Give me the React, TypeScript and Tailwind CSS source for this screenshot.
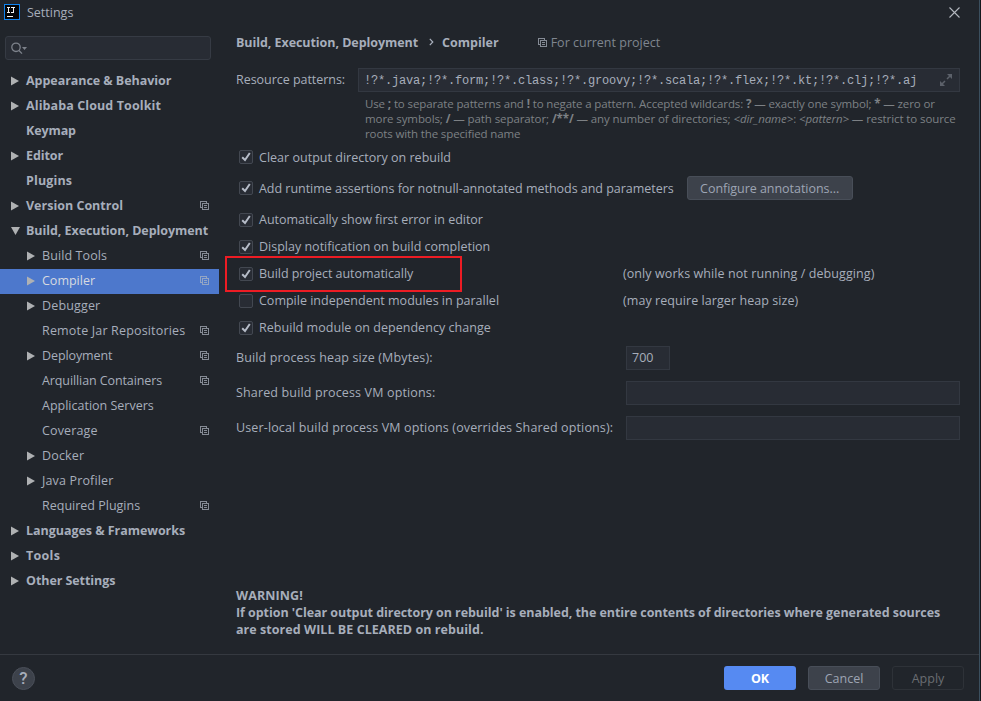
interface TreeItem {
  label: string;
  level: 0 | 1;
  arrow?: "right" | "down";
  project?: boolean;
  selected?: boolean;
  tracking?: string;
}

const tree: TreeItem[] = [
  { label: "Appearance & Behavior", level: 0, arrow: "right", tracking: "tracking-[-0.05px]" },
  { label: "Alibaba Cloud Toolkit", level: 0, arrow: "right", tracking: "tracking-[0.1px]" },
  { label: "Keymap", level: 0, tracking: "tracking-[-0.1px]" },
  { label: "Editor", level: 0, arrow: "right", tracking: "tracking-[-0.1px]" },
  { label: "Plugins", level: 0, tracking: "tracking-[0.15px]" },
  { label: "Version Control", level: 0, arrow: "right", project: true },
  { label: "Build, Execution, Deployment", level: 0, arrow: "down", tracking: "tracking-[-0.06px]" },
  { label: "Build Tools", level: 1, arrow: "right", project: true, tracking: "tracking-[0.1px]" },
  { label: "Compiler", level: 1, arrow: "right", project: true, selected: true },
  { label: "Debugger", level: 1, arrow: "right", tracking: "tracking-[0.15px]" },
  { label: "Remote Jar Repositories", level: 1, project: true, tracking: "tracking-[0.17px]" },
  { label: "Deployment", level: 1, arrow: "right", project: true, tracking: "tracking-[-0.1px]" },
  { label: "Arquillian Containers", level: 1, project: true, tracking: "tracking-[-0.1px]" },
  { label: "Application Servers", level: 1 },
  { label: "Coverage", level: 1, project: true, tracking: "tracking-[0.15px]" },
  { label: "Docker", level: 1, arrow: "right", tracking: "tracking-[0.15px]" },
  { label: "Java Profiler", level: 1, arrow: "right", tracking: "tracking-[0.15px]" },
  { label: "Required Plugins", level: 1, project: true },
  { label: "Languages & Frameworks", level: 0, arrow: "right", tracking: "tracking-[-0.04px]" },
  { label: "Tools", level: 0, arrow: "right", tracking: "tracking-[0.3px]" },
  { label: "Other Settings", level: 0, arrow: "right", tracking: "tracking-[-0.07px]" },
];

function ProjectIcon({ className = "" }: { className?: string }) {
  return (
    <svg className={`shrink-0 ${className}`} width="9" height="9" viewBox="0 0 9 9" fill="none" stroke="currentColor" shapeRendering="crispEdges">
      <path d="M2 6.5H0.5V0.5H6.5V2" />
      <path d="M2.5 2.5H8.5V8.5H2.5Z" />
      <path d="M4 4.5H7M4 6.5H7" />
    </svg>
  );
}

function Arrow({ dir }: { dir?: "right" | "down" }) {
  return (
    <svg className="shrink-0" width="10" height="10" viewBox="0 0 10 10" fill="#afb1b3">
      {dir === "right" && <path d="M1 0.5L9 5L1 9.5Z" />}
      {dir === "down" && <path d="M1 1H10L5.5 9Z" />}
    </svg>
  );
}

function TreeRow({ item }: { item: TreeItem }) {
  return (
    <div
      className={`flex h-[25px] items-center pb-[2px] pr-[10px] ${item.level === 0 ? "pl-[10px] font-bold" : "pl-[26px]"} ${
        item.selected ? "bg-[#4d78cc] text-[#d7dae0]" : ""
      }`}
    >
      <Arrow dir={item.arrow} />
      <span className={`ml-[6px] flex-1 whitespace-nowrap pb-px ${item.tracking ?? ""}`}>{item.label}</span>
      {item.project && <ProjectIcon className={item.selected ? "text-[#93a5c4]" : "text-[#858b95]"} />}
    </div>
  );
}

function Check({ label, checked = true, tracking = "" }: { label: string; checked?: boolean; tracking?: string }) {
  return (
    <div className="flex items-center">
      <span className="flex size-[14px] shrink-0 items-center justify-center rounded-[2px] border border-[#434851] bg-[#282c34]">
        {checked && (
          <svg width="10" height="10" viewBox="0 0 10 10" fill="none" stroke="#b6bcc8" strokeWidth="2">
            <path d="M1.2 5.2L4 8L8.8 1" />
          </svg>
        )}
      </span>
      <span className={`ml-[6px] whitespace-nowrap ${tracking}`}>{label}</span>
    </div>
  );
}

function TitleBar() {
  return (
    <header className="flex h-6 items-center pl-1 pr-[19px]">
      <svg width="16" height="16" viewBox="0 0 16 16" shapeRendering="crispEdges">
        <rect width="16" height="16" fill="#0f83f0" />
        <rect x="1" y="1" width="14" height="14" fill="#050505" />
        <path d="M3 3.5H6M4.5 3V9M3 8.5H6M7 3.5H10.5M9.5 3V8M7 8.5H9.5" stroke="#f4f4f4" fill="none" />
        <path d="M3 12.5H9" stroke="#f4f4f4" />
      </svg>
      <span className="ml-[7px] flex-1">Settings</span>
      <svg width="11" height="11" viewBox="0 0 11 11" stroke="#b4b8bf" strokeWidth="1.1">
        <path d="M0.5 0.5L10.5 10.5M10.5 0.5L0.5 10.5" />
      </svg>
    </header>
  );
}

function Sidebar() {
  return (
    <aside className="w-[219px] shrink-0">
      <div className="mb-[9px] ml-[5px] mt-3 flex h-6 w-[206px] items-center rounded-[3px] border border-[#363b44] bg-[#282c34] pl-[5px]">
        <svg width="17" height="13" viewBox="0 0 17 13" fill="none" stroke="#7d828b" strokeWidth="1.3">
          <circle cx="5" cy="5.3" r="4.2" />
          <path d="M8 8.5L11 11.6" />
          <path d="M11 5H16L13.5 8Z" fill="#7d828b" stroke="none" />
        </svg>
      </div>
      {tree.map((item) => (
        <TreeRow key={item.label} item={item} />
      ))}
    </aside>
  );
}

function CompilerPage() {
  return (
    <main className="flex min-w-0 flex-1 flex-col pl-[17px] pr-[19px]">
      <div className="mt-[6px] flex h-6 items-center">
        <span className="whitespace-nowrap font-bold tracking-[-0.06px]">Build, Execution, Deployment</span>
        <svg className="ml-[11px]" width="5" height="8" viewBox="0 0 5 8" fill="none" stroke="#abb2bf" strokeWidth="1.2">
          <path d="M0.8 0.8L3.8 4L0.8 7.2" />
        </svg>
        <span className="ml-[8px] font-bold">Compiler</span>
        <ProjectIcon className="ml-[39px] text-[#858b95]" />
        <span className="ml-1 whitespace-nowrap text-[#7f858f]">For current project</span>
      </div>

      <div className="mt-[14px] flex h-6 items-center">
        <span className="w-[122px] shrink-0 pb-px tracking-[-0.04px]">Resource patterns:</span>
        <div className="flex h-6 flex-1 items-center justify-between border border-[#333841] bg-[#282c34] pl-[5px] pr-[7px]">
          <span className="whitespace-pre pt-[3px] font-['Liberation_Mono',monospace] text-[12px] tracking-[-0.2px]">
            !?*.java;!?*.form;!?*.class;!?*.groovy;!?*.scala;!?*.flex;!?*.kt;!?*.clj;!?*.aj
          </span>
          <svg width="12" height="12" viewBox="0 0 12 12" fill="#5c616a" stroke="#5c616a">
            <path d="M7 0H12V5Z" stroke="none" />
            <path d="M0 7V12H5Z" stroke="none" />
            <path d="M10 2L7 5M2 10L5 7" strokeWidth="1.5" />
          </svg>
        </div>
      </div>

      <div className="mt-1 h-[45px] whitespace-nowrap pl-[129px] text-[11.5px] leading-[15px] tracking-[-0.12px] text-[#7d8185]">
        <p>
          Use <b>;</b> to separate patterns and <b>!</b> to negate a pattern. Accepted wildcards: <b>?</b> — exactly one symbol; <b>*</b> — zero or
        </p>
        <p className="tracking-[-0.09px]">
          more symbols; <b>/</b> — path separator; <b>/**/</b> — any number of directories; <i>&lt;dir_name&gt;</i>: <i>&lt;pattern&gt;</i> — restrict to source
        </p>
        <p>roots with the specified name</p>
      </div>

      <div className="mt-[9px] flex flex-col pl-[3px]">
        <div className="flex h-[14px] items-center">
          <Check label="Clear output directory on rebuild" tracking="tracking-[0.02px]" />
        </div>
        <div className="flex h-12 items-center">
          <Check label="Add runtime assertions for notnull-annotated methods and parameters" tracking="tracking-[-0.03px]" />
          <button className="ml-[13px] h-6 w-[166px] rounded-[3px] border border-[#484e58] bg-[#3d424b] tracking-[-0.04px] text-[#9da5b4]">
            Configure annotations...
          </button>
        </div>
        <div className="-mt-[6px] flex flex-col">
          <div className="flex h-[27px] items-center">
            <Check label="Automatically show first error in editor" tracking="tracking-[-0.02px]" />
          </div>
          <div className="flex h-[27px] items-center">
            <Check label="Display notification on build completion" />
          </div>
          <div className="relative flex h-[27px] items-center">
            <div className="absolute -left-[14px] -top-[4px] h-9 w-[237px] border-2 border-[#ed1c24]" />
            <div className="w-[384px]">
              <Check label="Build project automatically" tracking="tracking-[-0.04px]" />
            </div>
            <span className="whitespace-nowrap tracking-[0.08px]">(only works while not running / debugging)</span>
          </div>
          <div className="flex h-[27px] items-center">
            <div className="w-[384px]">
              <Check label="Compile independent modules in parallel" checked={false} />
            </div>
            <span className="whitespace-nowrap tracking-[0.07px]">(may require larger heap size)</span>
          </div>
          <div className="flex h-[27px] items-center">
            <Check label="Rebuild module on dependency change" tracking="tracking-[0.04px]" />
          </div>
        </div>
      </div>

      <div className="mt-[5px] flex flex-col gap-[11px]">
        <div className="flex h-6 items-center">
          <span className="w-[390px] shrink-0 pb-px tracking-[0.13px]">Build process heap size (Mbytes):</span>
          <div className="flex h-6 w-11 items-center border border-[#333841] bg-[#282c34] pb-px pl-[5px]">700</div>
        </div>
        <div className="flex h-6 items-center">
          <span className="w-[390px] shrink-0 pb-px tracking-[0.15px]">Shared build process VM options:</span>
          <div className="h-6 flex-1 border border-[#333841] bg-[#282c34]" />
        </div>
        <div className="flex h-6 items-center">
          <span className="w-[390px] shrink-0 whitespace-nowrap pb-px tracking-[0.14px]">
            User-local build process VM options (overrides Shared options):
          </span>
          <div className="h-6 flex-1 border border-[#333841] bg-[#282c34]" />
        </div>
      </div>

      <div className="mb-4 mt-auto whitespace-nowrap font-bold leading-[17px] tracking-[-0.055px]">
        <p className="tracking-[0.1px]">WARNING!</p>
        <p>If option 'Clear output directory on rebuild' is enabled, the entire contents of directories where generated sources</p>
        <p className="tracking-[0.05px]">are stored WILL BE CLEARED on rebuild.</p>
      </div>
    </main>
  );
}

export default function App() {
  return (
    <div className="flex h-[701px] w-[981px] flex-col overflow-hidden border-r border-[#15181d] bg-[#21252b] font-['Open_Sans','Noto_Sans',sans-serif] text-[12.5px] leading-[17px] text-[#a7aebb]">
      <div className="flex flex-1 flex-col border-r border-[#3b4f5e]">
        <TitleBar />
        <div className="flex flex-1">
          <Sidebar />
          <CompilerPage />
        </div>
        <footer className="flex h-[47px] items-center gap-3 border-t border-[#353940] pl-3 pr-[15px]">
          <div className="mr-auto flex size-[23px] items-center justify-center rounded-full border border-[#4a4f59] bg-[#3d424b] font-['Roboto',sans-serif] text-[17px] font-medium">
            ?
          </div>
          <button className="h-6 w-[72px] rounded-[3px] bg-[#568af2] font-bold text-white">OK</button>
          <button className="h-6 w-[72px] rounded-[3px] border border-[#484e58] bg-[#3d424b] text-[#9da5b4]">Cancel</button>
          <button className="h-6 w-[72px] rounded-[3px] border border-[#2e3238] text-[#6a6d72]">Apply</button>
        </footer>
      </div>
    </div>
  );
}
